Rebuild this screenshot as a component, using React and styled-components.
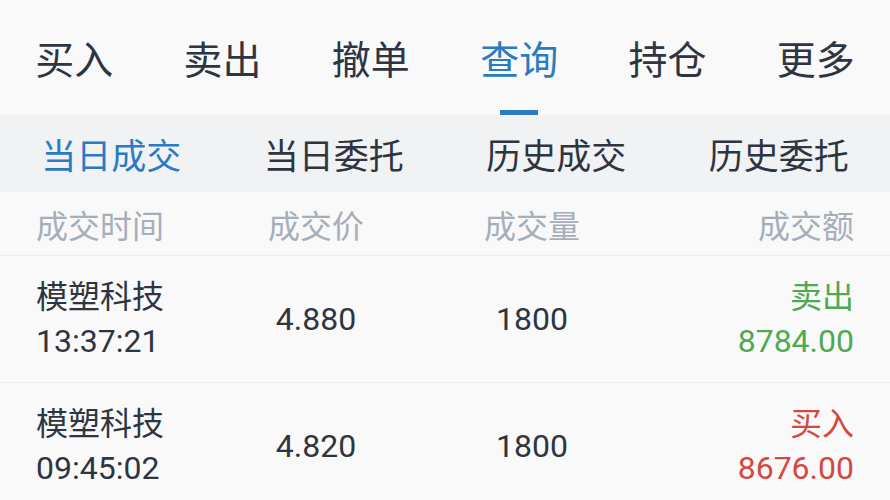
import styled, { createGlobalStyle } from 'styled-components';

const GlobalStyle = createGlobalStyle`
  body {
    margin: 0;
    background: #f9f9fa;
    font-family: Roboto, "Noto Sans CJK SC", sans-serif;
  }
`;

const Container = styled.div`
  width: 890px;
  height: 500px;
  overflow: hidden;
  background: #f9f9fa;
  color: #2e3541;
`;

const TopTabs = styled.div`
  display: grid;
  grid-template-columns: repeat(6, 1fr);
  height: 115px;
`;

const TopTab = styled.div`
  position: relative;
  display: flex;
  align-items: center;
  justify-content: center;
  padding-bottom: 2px;
  font-size: 39px;
  color: ${(props) => (props.active ? '#2b7bc4' : '#2e3541')};

  &::after {
    content: '';
    display: ${(props) => (props.active ? 'block' : 'none')};
    position: absolute;
    bottom: 0;
    left: 50%;
    transform: translateX(-50%);
    width: 38px;
    height: 5px;
    background: #2b7bc4;
  }
`;

const SubTabs = styled.div`
  display: grid;
  grid-template-columns: repeat(4, 1fr);
  height: 77px;
  background: #f1f2f4;
`;

const SubTab = styled.div`
  display: flex;
  align-items: center;
  justify-content: center;
  font-size: 35px;
  color: ${(props) => (props.active ? '#2b7bc4' : '#2e3541')};
`;

const Row = styled.div`
  display: grid;
  grid-template-columns: 170px 220px 212px 1fr;
  align-items: center;
  padding: 0 36px;
  height: ${(props) => props.h}px;
  border-bottom: 1px solid #ebecee;
`;

const HeadCell = styled.div`
  font-size: 32px;
  color: #a6afb9;
  text-align: ${(props) => props.align || 'left'};
`;

const Cell = styled.div`
  font-size: 32px;
  line-height: 44px;
  text-align: ${(props) => props.align || 'left'};
  color: ${(props) => props.color || '#2e3541'};
`;

const tabs = ['买入', '卖出', '撤单', '查询', '持仓', '更多'];
const subTabs = ['当日成交', '当日委托', '历史成交', '历史委托'];

const trades = [
  { name: '模塑科技', time: '13:37:21', price: '4.880', vol: '1800', side: '卖出', amount: '8784.00', color: '#4eaa52' },
  { name: '模塑科技', time: '09:45:02', price: '4.820', vol: '1800', side: '买入', amount: '8676.00', color: '#d4483f' },
];

const App = () => {
  return (
    <Container>
      <GlobalStyle />
      <TopTabs>
        {tabs.map((t) => (
          <TopTab key={t} active={t === '查询'}>
            {t}
          </TopTab>
        ))}
      </TopTabs>
      <SubTabs>
        {subTabs.map((t, i) => (
          <SubTab key={t} active={i === 0}>
            {t}
          </SubTab>
        ))}
      </SubTabs>
      <Row h={63}>
        <HeadCell>成交时间</HeadCell>
        <HeadCell align="center">成交价</HeadCell>
        <HeadCell align="center">成交量</HeadCell>
        <HeadCell align="right">成交额</HeadCell>
      </Row>
      {trades.map((tr) => (
        <Row h={126} key={tr.time}>
          <div>
            <Cell>{tr.name}</Cell>
            <Cell>{tr.time}</Cell>
          </div>
          <Cell align="center">{tr.price}</Cell>
          <Cell align="center">{tr.vol}</Cell>
          <div>
            <Cell align="right" color={tr.color}>{tr.side}</Cell>
            <Cell align="right" color={tr.color}>{tr.amount}</Cell>
          </div>
        </Row>
      ))}
    </Container>
  );
};

export default App;
